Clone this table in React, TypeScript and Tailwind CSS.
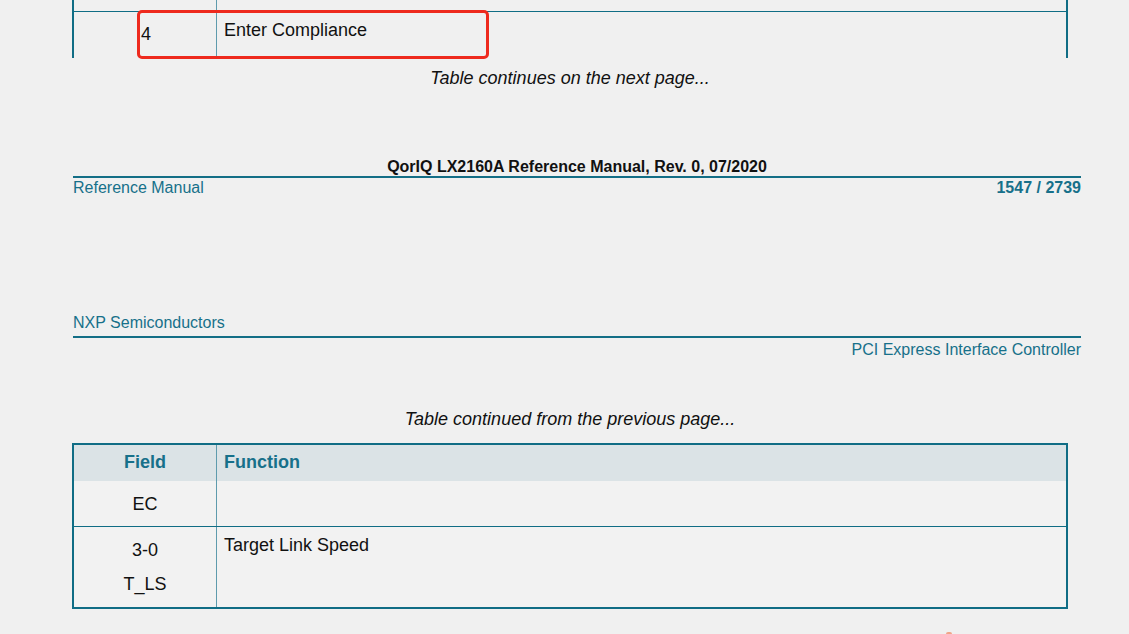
import React from 'react';

const teal = 'text-[#17708a]';

function App() {
  return (
    <div className="relative h-[634px] w-full overflow-hidden bg-[#f0f0f0] font-['Liberation_Sans',Arial,sans-serif] text-[#111]">
      {/* fim da tabela da página anterior */}
      <div className="relative ml-[72px] w-[996px] border-x-2 border-[#106d85]">
        <div className="flex h-[12px] border-b border-[#106d85]">
          <div className="w-[143px] border-r border-[#5e9bad]" />
        </div>
        <div className="flex h-[46px] text-[18px] leading-[21px]">
          <div className="w-[143px] border-r border-[#5e9bad] pl-[67px] pt-[12px]">4</div>
          <div className="pl-[7px] pt-[8px]">Enter Compliance</div>
        </div>
        <div className="absolute left-[63px] top-[10px] h-[49px] w-[352px] rounded-[5px] border-[3px] border-[#ee2a1e]" />
      </div>

      <p className="ml-[72px] mt-[10px] w-[996px] text-center text-[18px] italic leading-[21px]">
        Table continues on the next page...
      </p>

      {/* rodapé */}
      <div className="ml-[73px] mt-[69px] w-[1008px] text-[16px] leading-[18px]">
        <p className="text-center font-bold">QorIQ LX2160A Reference Manual, Rev. 0, 07/2020</p>
        <div className="h-[2px] bg-[#136e86]" />
        <div className={`mt-[1px] flex justify-between ${teal}`}>
          <span>Reference Manual</span>
          <span className="font-bold">1547 / 2739</span>
        </div>
      </div>

      {/* cabeçalho da próxima página */}
      <div className="ml-[73px] mt-[117px] w-[1008px] text-[16px] leading-[18px]">
        <p className={teal}>NXP Semiconductors</p>
        <div className="mt-[4px] h-[2px] bg-[#136e86]" />
        <p className={`mt-[3px] text-right ${teal}`}>PCI Express Interface Controller</p>
      </div>

      <p className="ml-[72px] mt-[50px] w-[996px] text-center text-[18px] italic leading-[21px]">
        Table continued from the previous page...
      </p>

      <div className="ml-[72px] mt-[13px] w-[996px] border-2 border-[#106d85] bg-[#f2f2f2] text-[18px] leading-[21px]">
        <div className={`flex h-[36px] bg-[#dbe3e6] font-bold ${teal}`}>
          <div className="w-[143px] border-r border-[#5e9bad] pt-[7px] text-center">Field</div>
          <div className="pl-[7px] pt-[7px]">Function</div>
        </div>
        <div className="flex h-[46px] border-b border-[#106d85]">
          <div className="w-[143px] border-r border-[#5e9bad] pt-[13px] text-center">EC</div>
          <div className="pl-[7px]" />
        </div>
        <div className="flex h-[80px]">
          <div className="w-[143px] border-r border-[#5e9bad] pt-[13px] text-center">
            <p>3-0</p>
            <p className="mt-[13px]">T_LS</p>
          </div>
          <div className="pl-[7px] pt-[8px]">Target Link Speed</div>
        </div>
      </div>

      <div className="absolute left-[946px] top-[632px] h-[4px] w-[6px] rounded-full bg-[#f0a488]" />
    </div>
  );
}

export default App;
